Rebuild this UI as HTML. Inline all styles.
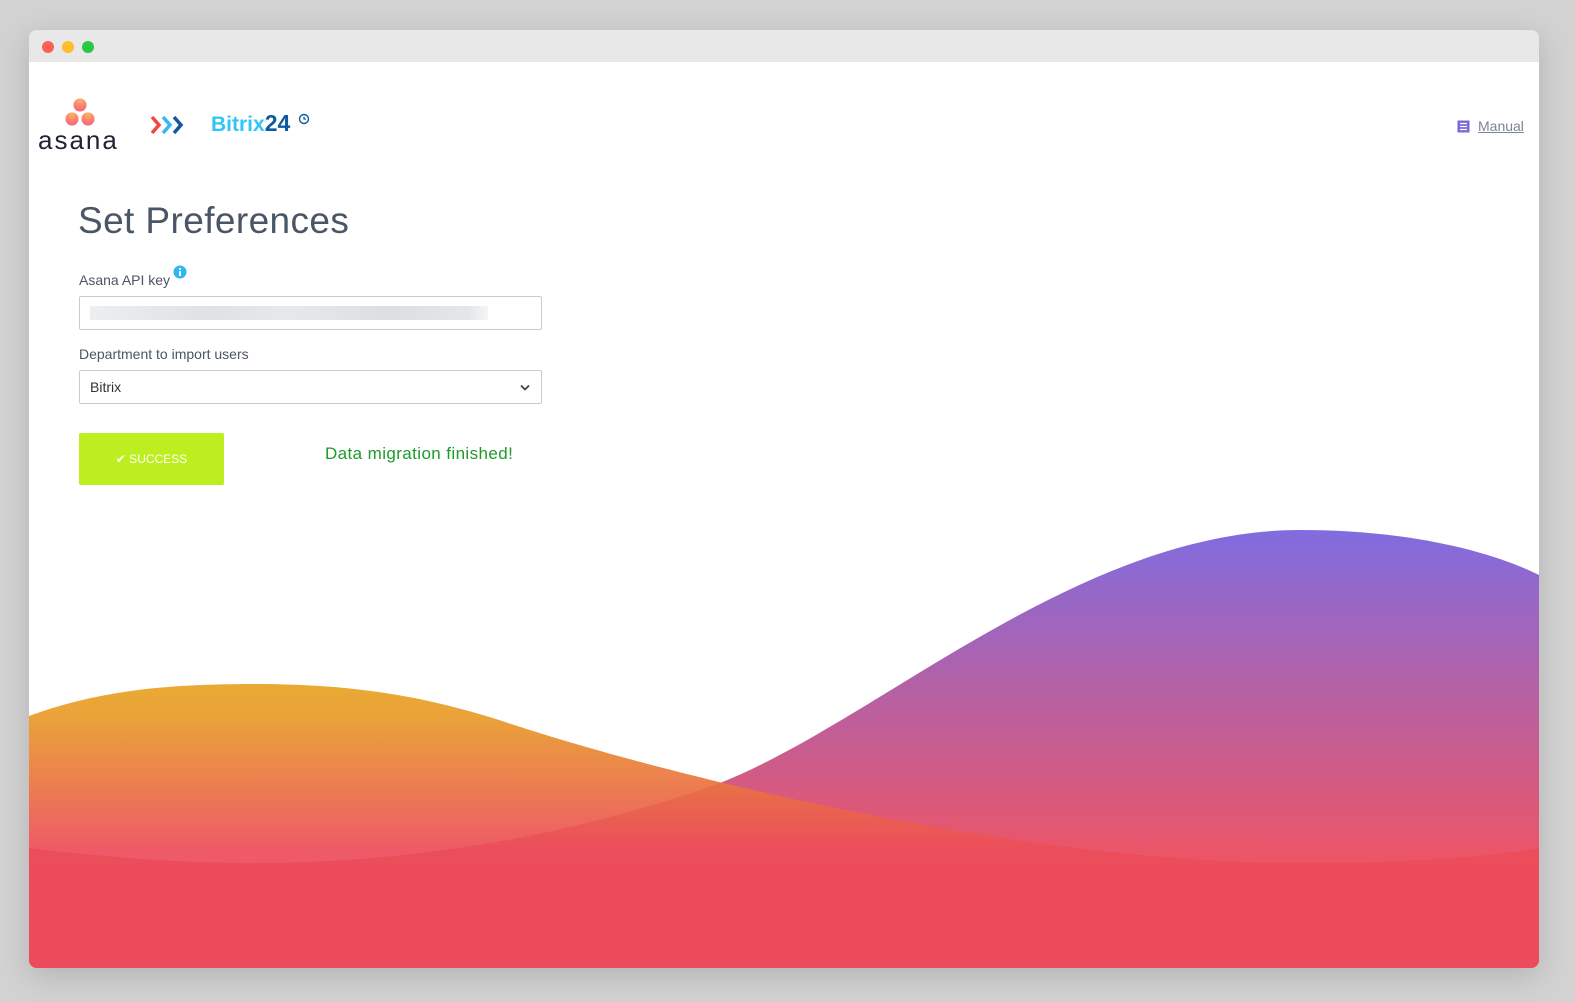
<!DOCTYPE html>
<html style="margin:0;width:1575px;height:1002px;overflow:hidden"><head><meta charset="utf-8"><style>
body{margin:0;width:1575px;height:1002px;background:#d2d2d2;font-family:"Liberation Sans",sans-serif;position:relative;overflow:hidden}
.win{position:absolute;left:29px;top:30px;width:1510px;height:938px;background:#fff;border-radius:8px;overflow:hidden;box-shadow:0 8px 30px rgba(0,0,0,.15)}
.bar{height:32px;background:#e8e8e8;position:relative}
.dot{position:absolute;top:11px;width:12px;height:12px;border-radius:50%}
.waves{position:absolute;left:0;top:0}
.t{position:absolute;white-space:nowrap}
.input{position:absolute;left:50px;width:461px;height:32px;border:1px solid #ccc;border-radius:2px;background:#fff}
</style></head><body>
<div class="win">
<div class="bar"><div class="dot" style="left:13px;background:#fe5f57"></div><div class="dot" style="left:33px;background:#febc2e"></div><div class="dot" style="left:53px;background:#28c840"></div></div>
<svg class="waves" width="1510" height="938">
<defs>
<linearGradient id="p" x1="0" y1="500" x2="0" y2="830" gradientUnits="userSpaceOnUse"><stop offset="0" stop-color="#7a64de"/><stop offset="1" stop-color="#ec4c5e"/></linearGradient>
<linearGradient id="o" x1="0" y1="654" x2="0" y2="820" gradientUnits="userSpaceOnUse"><stop offset="0" stop-color="#e8a222"/><stop offset="0.2" stop-color="#e89a28"/><stop offset="1" stop-color="#ec4c5a"/></linearGradient>
</defs>
<path d="M0,818 C80,828 160,833 226,833 C400,833 560,800 691,753 C850,690 1050,500 1271,500 C1390,500 1470,525 1510,545 L1510,938 L0,938Z" fill="url(#p)" opacity="0.95"/>
<path d="M0,686 C70,660 140,654 226,654 C330,654 400,668 470,690 C650,750 1000,833 1271,833 C1400,833 1470,825 1510,818 L1510,938 L0,938Z" fill="url(#o)" opacity="0.92"/>
<rect x="0" y="835" width="1510" height="103" fill="#eb4b5a"/>
</svg>
<svg class="t" style="left:34px;top:66px" width="60" height="30"><defs><radialGradient id="a" cx="0.5" cy="0.2" r="0.8"><stop offset="0" stop-color="#ffb35a"/><stop offset="1" stop-color="#f95d80"/></radialGradient></defs><circle cx="17" cy="9" r="6.5" fill="url(#a)"/><circle cx="9" cy="23" r="6.5" fill="url(#a)"/><circle cx="25" cy="23" r="6.5" fill="url(#a)"/></svg>
<div class="t" style="left:9px;top:95px;font-size:26px;color:#1e2235;letter-spacing:2px">asana</div>
<svg class="t" style="left:121px;top:85px" width="36" height="20"><path d="M2,2 L9,10 L2,18" stroke="#f0483e" stroke-width="3.5" fill="none"/><path d="M13,2 L20,10 L13,18" stroke="#38b6f2" stroke-width="3.5" fill="none"/><path d="M24,2 L31,10 L24,18" stroke="#1258a0" stroke-width="3.5" fill="none"/></svg>
<div class="t" style="left:182px;top:80px;font-size:21px;font-weight:bold;color:#2fc6f6">Bitrix<span style="color:#0d5c9e;font-size:23px">24</span></div>
<svg class="t" style="left:269px;top:83px" width="12" height="12"><circle cx="6" cy="6" r="4.5" stroke="#0d5c9e" stroke-width="1.4" fill="none"/><path d="M6,3.5V6H8" stroke="#0d5c9e" stroke-width="1.2" fill="none"/></svg>
<svg class="t" style="left:1428px;top:90px" width="13" height="13"><rect x="0.5" y="0.5" width="12" height="12" fill="#7b68d8"/><path d="M3,3.5H10M3,6.5H10M3,9.5H10" stroke="#fff" stroke-width="1.2"/></svg>
<div class="t" style="left:1449px;top:88px;font-size:14px;color:#7b8595;text-decoration:underline">Manual</div>
<div class="t" style="left:49px;top:170px;font-size:37px;color:#4a5566;letter-spacing:0.4px">Set Preferences</div>
<div class="t" style="left:50px;top:242px;font-size:14px;color:#4a5566">Asana API key</div>
<svg class="t" style="left:144px;top:235px" width="14" height="14"><circle cx="7" cy="7" r="6.5" fill="#2fb8f0"/><rect x="6" y="6" width="2" height="5" fill="#fff"/><circle cx="7" cy="4" r="1.1" fill="#fff"/></svg>
<div class="input" style="top:266px"><div style="position:absolute;left:10px;top:9px;width:398px;height:14px;background:linear-gradient(90deg,#eceef0,#dfe1e4 30%,#e6e8ea 50%,#dcdee1 75%,#e4e6e8 95%,#f5f5f6)"></div></div>
<div class="t" style="left:50px;top:316px;font-size:14px;color:#4a5566">Department to import users</div>
<div class="input" style="top:340px"><div class="t" style="left:10px;top:8px;font-size:14px;color:#333">Bitrix</div><svg class="t" style="left:440px;top:13px" width="10" height="8"><path d="M1,1.5 L5,5.5 L9,1.5" stroke="#444" stroke-width="1.8" fill="none"/></svg></div>
<div class="t" style="left:50px;top:403px;width:145px;height:52px;background:#bdee1f;border-radius:2px;color:#fff;font-size:12px;text-align:center;line-height:52px">✔ SUCCESS</div>
<div class="t" style="left:296px;top:414px;font-size:17px;color:#1e9a2a;letter-spacing:0.4px">Data migration finished!</div>
</div>
</body></html>
